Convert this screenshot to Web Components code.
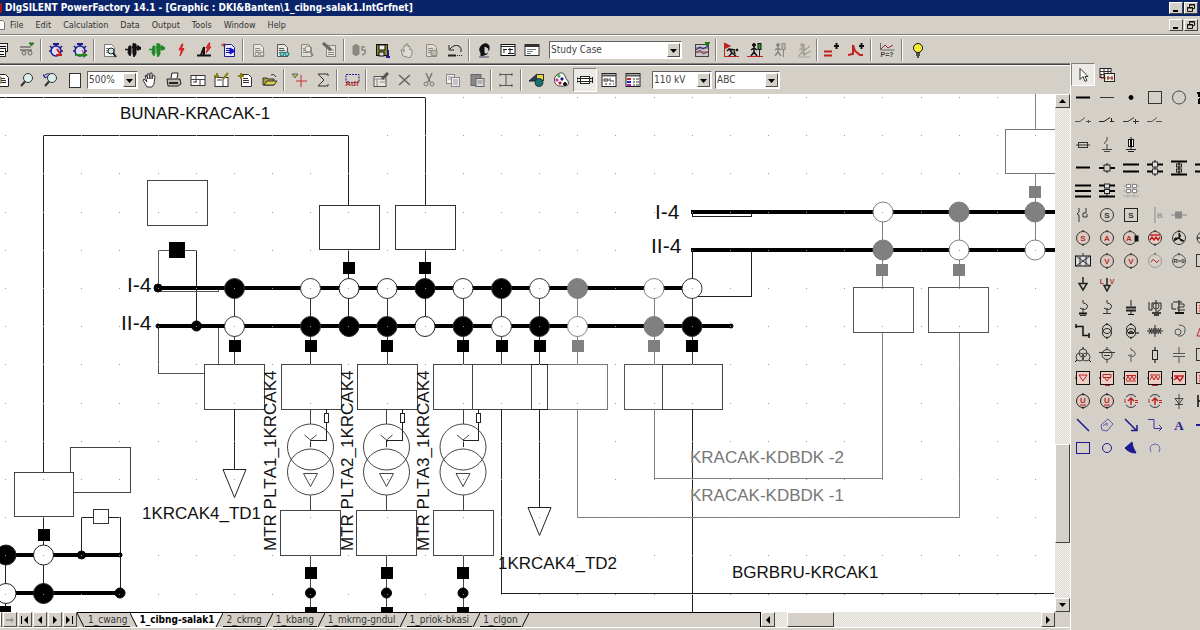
<!DOCTYPE html>
<html lang="en">
<head>
<meta charset="utf-8">
<title>DIgSILENT PowerFactory 14.1</title>
<style>
  html, body { margin: 0; height: 100%; overflow: hidden; }
  body { background: #d4d0c8; font-family: "DejaVu Sans Condensed", "DejaVu Sans", sans-serif; font-size: 9px; color: #222; }
</style>
</head>
<body>
<pf-app></pf-app>
<script>
/* ---------- icon library: 16 x 16 drawings ---------- */
const P = (d, stroke = '#000', fill = 'none', w = 1) =>
  `<path d="${d}" stroke="${stroke}" fill="${fill}" stroke-width="${w}"/>`;
const C = (x, y, r, stroke = '#222', fill = 'none', w = 1) =>
  `<circle cx="${x}" cy="${y}" r="${r}" stroke="${stroke}" fill="${fill}" stroke-width="${w}"/>`;
const R = (x, y, w, h, stroke = '#222', fill = 'none', sw = 1) =>
  `<rect x="${x}" y="${y}" width="${w}" height="${h}" stroke="${stroke}" fill="${fill}" stroke-width="${sw}"/>`;
const T = (t, x, y, c = '#b03030', s = 8) =>
  `<text x="${x}" y="${y}" fill="${c}" font-size="${s}" font-weight="bold" text-anchor="middle" font-family="Liberation Sans, sans-serif">${t}</text>`;
const G = '#8a8880', RED = '#c02020', BLUE = '#1c1c90';
const page = (c, f = '#fff') => P('M3.5 2.5h7l3 3v9h-10z', c, f) + P('M5 6.500h5M5 8.500h6M5 10.500h6', c);
const glass = c => C(9, 6, 4.5, c, '#d8f0ec') + P('M6 9.500L2 14', c, 'none', 2);
const clock = P('M5 2h6M8 2v2', BLUE, 'none', 2) + C(8, 9, 5, BLUE, '#dcdcf4', 1.5) + P('M2 4l2 2M14 4l-2 2M1 9h2M13 9h2', BLUE, 'none', 1.5);
const man = c => C(7, 3, 1.5, c, c) + P('M7 5v5l-3 4M7 10l3 4M4 8l3-2 3 2', c, 'none', 1.5);
const box = R(1.5, 1.5, 13, 13, '#111', '#ecd0c8') + P('M0 8h2', '#000');
const bars = c => P('M0 7.500h4M7 5.500h9M8.500 1v9M13 7h3', c, 'none', 1.5) + P('M4 4h2v7l-1 3-2-3zM8 2h3v10l-2 3-1-3zM12 4h2v4h-2z', c, c);

const ICONS = {
  pages: R(3.5, 1.500, 9, 8, '#222', '#eee') + R(1.5, 6.500, 9, 8, '#222', '#fff') + P('M3 9.500h6M3 12.500h6M5 4.500h6'),
  specs: P('M1 5h11M1 8h12', G, 'none', 2) + C(5, 11, 2, '#666') + C(11, 11, 2, '#666') + P('M10 1h5l-2.500 3z', '#287828', '#287828'),
  clockl: clock + P('M9 7l4 6M8 13h6', RED, 'none', 2),
  clockg: clock + P('M3 13h12M11 11l3 2-3 2', '#208820', 'none', 2) + P('M10 8l2 4', RED),
  docfind: page('#777', '#fff') + C(10, 9, 3, '#222', '#cde8e4') + P('M12 11l3 4', '#222', 'none', 2),
  barsk: bars('#111'), barsg: bars('#208828'),
  bolt: P('M9 2L6 8h2.500L7 14l4-7.500H8.500L10 2z', '#d02020', '#e03030'),
  boltk: P('M0 13.500h14M4 13l3-8v9', '#111', 'none', 2) + P('M12 1L9 6h2l-2 5 5-6h-2l1-4z', '#d02020', '#e03030'),
  docarrow: page(BLUE, '#e8e8ff') + P('M0 3h5M3 1v4', '#902020', '#902020') + P('M9 6l5 3-5 3z', '#1010d0', '#1010d0'),
  docspec: page(G, '#e8e6e0') + C(7, 12, 2, G) + C(12, 12, 2, G),
  docspec2: page('#555', '#e8e8e4') + C(8, 12, 2, '#087878', '#8cc') + C(13, 12, 2, '#087878', '#8cc'),
  docfindg: page(G, '#e0ddd6') + C(10, 7, 3, G, '#e8e6e0') + P('M12 9l3 5', G, 'none', 2),
  docpen: R(4.5, 3.500, 9, 11, G, '#e4e2dc') + P('M6 8h6M6 10.500h6M6 12.500h6', G) + P('M1 1l8 7', '#666', 'none', 3),
  db: P('M2 4q3-3 6 0v8q-3 3-6 0z', G, G) + P('M11 5h3M11 4v4h3q1 4-3 5', G, 'none', 1.5),
  save: R(1.500, 2.500, 11, 11, '#111', '#8c8c20') + R(4, 3, 6, 5, '#111', '#eee') + R(4, 10, 5, 4, '#111', '#ddd') + P('M13 8v7M11 15h4', BLUE, 'none', 2),
  hand: P('M4 14L2 8l1-1 2 3V4l1-1 1 1V2l2 0v3l1-1 1 1v3l1-1 1 1v4l-2 4z', G, '#dedbd4'),
  docdb: page(G, '#dedbd4') + P('M8 9q4-2 6 0v4q-3 2-6 0z', G, '#bbb8b0'),
  undo: P('M3 7q4-5 9-3 3 2 2 6M2 3v5h5', '#222') + P('M1 13.500h8', '#222', 'none', 2) + P('M10 13.500h1M12 13.500h1M14 13.500h1', '#222'),
  head: P('M5 14v-3q-3-4 1-8 5-3 7 1v4l-2 1v3z', '#111', '#111') + P('M9 5l3 2-1 4H9z', '#ccc', '#ddd') + P('M3 15h10', '#446'),
  win: R(1, 2.500, 14, 11, '#111', '#fff') + P('M1 4.500h14M4 7v4M3 7.500h4M8 7.500h5M8 11.500h6M10 6v6', '#222'),
  winlines: R(1, 2.500, 14, 11, '#333', '#fff') + P('M1 4h14', '#333', 'none', 2) + P('M3 7.500h9M3 9.500h6M3 11.500h4', '#777'),
  graph: R(1.500, 2.500, 13, 12, '#444', '#c8c8c8') + P('M1 6h13M1 10h13', '#555') + P('M2 11l4-3 3 4 5-2', '#a03040') + P('M2 8l4-3 3 2 5-3', BLUE) + P('M11 0h5l-3 4z', '#187818', '#187818'),
  runflag: P('M1.500 1v14', RED) + P('M2 2l4 2-4 2z', RED, RED, 2) + P('M1 14.500h15', RED) + C(14, 8, 1, '#111', '#111') + P('M12 8l-6-1-2 2M7 8l2 3-3 3M9 11l4 3M11 9l1 3', '#111', 'none', 1.5),
  walk: man('#111') + P('M0 14.500h16', RED) + R(11, 1.500, 3, 6, '#111', '#30a030') + P('M12.500 8v7', '#222'),
  walkg: man(G) + R(11, 1.500, 3, 6, G, '#bbb') + P('M12.500 8v7', G),
  walkg2: man('#aaa79f') + P('M9 2v11M10 8l5-4M10 12l6-3', G) + P('M3 15h12', '#aaa79f'),
  eqplus: P('M0 9.500h8M0 13.500h8', RED, 'none', 2) + P('M12.500 1v6M10 4h5', '#111', 'none', 2),
  peakplus: P('M0 13l5-1V3l2 6 5 4h3', RED, 'none', 2) + P('M13.500 1v6M11 4h5', '#111', 'none', 2),
  curve: P('M1.500 1v7h14', '#666') + P('M2 7l4-4 3 3 5-3', '#902040') + T('P=?', 8, 15, '#444', 7),
  bulb: C(8, 6, 4.500, '#111', '#f4f030') + P('M6 11h4M6 13h4M7 15h2', '#222', 'none', 1.5),

  gopage: page('#222') + P('M0 5h6v6H0z', '#666', '#e8e030'),
  zoom: glass('#333'), zoomback: glass('#333') + P('M1 5q1-4 6-3M0 2l2 4 3-2', BLUE),
  sheet: R(2.500, 1.500, 11, 14, '#333', '#fff'),
  handk: P('M5 15L1 8l1-1 3 3-2-6 1-1 2 4-1-5 2 0 1 5V1l2 0v6l1-4 2 1-1 8-2 3z', '#333', '#fff'),
  print: P('M5 6l1-5h6l-1 5', '#222', '#fff') + P('M1 7h13l1 5-3 2H2z', '#222', '#bdb9ae') + P('M3 11h9', '#222', 'none', 2),
  panel: R(1, 3.500, 14, 10, '#333', '#fff') + P('M1 7.500h14M6 4v6M10 7v6M3 10h4', '#444'),
  panelstar: R(1, 5.500, 13, 9, '#333', '#fff') + P('M3 8h5M9 7v7', '#444') + P('M0 4h5M3 1v5M14 1l-5 6', '#8a8418', 'none', 2),
  newdoc: page('#333') + P('M0 4h6M3 1v6', '#8a8418', 'none', 2),
  folder: P('M1 13V6h4l1 1h6v6z', '#333', '#a8a030') + P('M2 13l3-4h10l-3 4z', '#333', '#d8d050') + P('M9 3q3-2 5 2', '#333'),
  redplus: P('M10 3v12M5 9h11', '#c83030') + P('M1 2h6l-3 4z', '#666', '#b8c030'),
  sigma: P('M13 4V2H3l6 6-6 6h10v-2', '#333', 'none', 1),
  adf: `<rect x="2" y="2.500" width="13" height="8" fill="none" stroke="${BLUE}" stroke-dasharray="2 1"/>` + T('Adf', 8, 14, '#b03030', 8),
  editform: R(1, 4.500, 12, 10, '#555', '#e8e6e0') + P('M1 7h12M4 7v7M7 10h5', '#888') + P('M15 1l-6 6', '#555', 'none', 3),
  x: P('M2 3l11 10M13 3L2 13', '#666', 'none', 1.5),
  cut: P('M5 1l4 9M11 1L7 10', '#777', 'none', 1.5) + C(5, 12, 2, '#777') + C(11, 12, 2, '#777'),
  copy: R(1.500, 2.500, 8, 9, '#888', '#eee') + R(6.500, 5.500, 8, 9, '#888', '#eee') + P('M8 8h5M8 10h5M8 12h5M3 5h4M3 7h3', '#999'),
  paste: R(2, 2.500, 10, 11, '#666', '#888') + R(7, 6.500, 8, 8, '#666', '#ddd') + P('M8.500 9h5M8.500 11h5', '#888'),
  ibeam: P('M2 2.500h12M2 13.500h12M2 1v3M14 1v3M2 12v3M14 12v3M8 3v10', '#555'),
  shapes: P('M0 9l8-7v7z', '#222', '#204070') + R(7.500, 2.500, 7, 6, '#333', '#e8d840') + C(10, 10.500, 4, '#183838', '#187070'),
  palette: P('M5 2q5-3 7 2 1 3 3 5 2 5-4 5-7 1-9-3-2-6 3-9z', '#444', '#fff') + C(6, 4, 1.200, '#40b040', '#40b040') + C(4, 8, 1.200, '#d030a0', '#d030a0') + C(7, 11, 1.200, RED, RED) + C(9, 7, 1.200, BLUE, BLUE) + C(12, 12, 1.500, '#111', '#111'),
  resist: R(3.500, 4.500, 9, 7, '#222', '#fff') + P('M0 6.500h16M0 9.500h16M0 5v6M15.500 5v6', '#222'),
  panelbits: R(1, 1.500, 14, 13, '#222', '#fff') + P('M1 3.500h14', '#555', 'none', 2) + P('M3 7h4v2H3zM9 6v3h4M4 12h2M8 12h2M12 12h1', '#333'),
  panelcol: R(1, 1.500, 14, 13, '#222', '#fff') + P('M1 3.500h14', '#555', 'none', 2) + P('M2 7h4', '#d02020', '#000', 2) + P('M2 10h4', '#2020d0', '#000', 2) + P('M2 13h4', '#c020a0', '#000', 2) + P('M8 7h2M11 7h3M8 10h2M11 10h3M8 13h2M11 13h3', '#333'),

  pointer: P('M5 1.500v11l3-3 2 5 2-1-2-4h3z', '#333', '#fff'),
  tablelay: R(1, 1.500, 11, 9, '#222', '#fff') + P('M1 4.500h11M1 7.500h11M5 2v8M9 2v8', '#333') + R(5.500, 6.500, 10, 8, '#222', '#eed') + P('M2 7v4h5M8 11h6M9 9v4M13 9v4', '#802020'),
  hbar: P('M1 7.500h14', '#000', 'none', 2), hline: P('M1 7.500h14', '#333'),
  dot: C(8, 7.500, 2, '#000', '#000'), sq: R(1.500, 1.500, 13, 12, '#333'), circ: C(8, 7.500, 6.500, '#444'),
  clipa: P('M2 3h10M4 3v4M4 9h10M4 9v5', '#000', 'none', 2),
  sw1: P('M0 8.500h5l5-4M11 8.500h5M13.500 7v3', '#555'), sw2: P('M0 8.500h5l6-4M12.500 5v4M11 8.500h4', '#222'),
  sw3: P('M0 8.500h5l6-4M12.500 6v5M10 8.500h6', '#333'), sw4: P('M0 8.500h5l5-4M9 8.500h6', '#555'),
  fuse: R(3.500, 5.500, 9, 5, '#333') + P('M1 8h14', '#333'),
  gnd: P('M8 0v3l-3 4M8 7v5M3 12.500h10M5 14.500h6', '#444'),
  gndf: P('M8 0v3M8 10v3M3 12.500h10M5 14.500h6', '#222') + R(5.500, 2.500, 5, 7, '#111', '#fff') + P('M8 3v6', '#000', 'none', 2),
  busb: P('M0 8h5M11 8h5', '#000', 'none', 2) + R(5, 5, 6, 6, '#222', '#d4d0c8') + P('M8 3v2M8 11v2'),
  bus2: P('M0 4.500h16M0 11.500h16', '#000', 'none', 2),
  bus2b: P('M0 4.500h16M0 11.500h16', '#000', 'none', 2) + R(5.500, 2, 5, 5, '#333', '#ddd') + R(5.500, 9, 5, 5, '#333', '#ddd') + P('M8 0v2M8 7v2M8 14v2'),
  busi: P('M0 1.500h16M0 14.500h16', '#000', 'none', 2) + R(5.500, 4, 5, 3, '#222') + R(5.500, 9, 5, 3, '#222') + P('M8 2v12'),
  bus3: P('M0 2.500h16M0 8h16M0 13.500h16', '#000', 'none', 2),
  bus3b: P('M0 2.500h16M0 8h16M0 13.500h16', '#000', 'none', 2) + R(5.500, 1, 5, 4, '#222', '#ddd') + R(5.500, 6.500, 5, 4, '#222', '#ddd') + P('M8 11v3'),
  busg: P('M0 3h16M0 8h16M0 13h16M5 0v15M11 0v15', '#aaa') + R(3.500, 1.500, 4, 3, '#888', '#fff') + R(9.500, 1.500, 4, 3, '#888', '#fff') + R(3.500, 6.500, 4, 3, '#888', '#fff') + R(9.500, 6.500, 4, 3, '#888', '#fff'),
  zig: P('M4 1v4l-2 2 2 1v7M11 1v5M11 6h-3v4h4V7', '#333'),
  circS: C(8, 8, 6.500, '#333') + T('S', 8, 11, '#333', 8), boxS: R(1.500, 1.500, 13, 13, '#222') + T('S', 8, 11, '#333', 8),
  Bl: P('M8 0v16', '#888') + T('B', 13, 11, '#999', 8),
  gsq: R(4.500, 5, 6, 6, '#888', '#888') + P('M0 8h16', '#888'),
  cS: P('M8 0v2M8 14v2') + C(8, 8, 6.500, '#333', '#dccac2') + T('S', 8, 11), cA: P('M8 0v2M8 14v2') + C(8, 8, 6.500, '#333', '#dccac2') + T('A', 8, 11),
  cAb: P('M7 0v2') + C(7, 8, 6.500, '#333', '#dccac2') + T('A', 6, 11) + R(12, 6, 3, 5, '#111', '#111'),
  cW: P('M8 0v2M8 14v2') + C(8, 8, 6.500, '#333', '#ecd0c8') + P('M3 5h10M3 10l2-3 2 3 2-3 2 3 2-3', RED, 'none', 1.500),
  fan: C(8, 8, 6.500, '#333') + P('M8 8V3l1.500 3zM8 8l-5 3 1-3zM8 8l5 3h-3z', '#111', '#111') + P('M8 0v2'),
  half: C(8, 8, 6, '#333') + P('M2 8h12'),
  net: R(0.500, 3, 15, 10, '#111', '#ddd') + P('M1 3l14 10M1 13L15 3M5 3v10M11 3v10M8 0v3', '#333'),
  cV: P('M8 0v2M8 14v2') + C(8, 8, 6.500, '#333', '#dccac2') + T('V', 8, 11), cVc: P('M8 0v2M8 14v3') + C(8, 8, 6.500, '#333', '#dccac2') + T('V', 8, 11),
  sine: P('M8 0v2') + C(8, 8, 6.500, '#999') + P('M4 9q2-4 4-1t4-1', RED),
  rg: P('M8 0v2') + C(8, 8, 6.500, '#555') + T('R=0', 8, 10, '#333', 6),
  load: P('M8 0v6M4 6.500h8L8 13z', '#222', 'none', 1.5),
  loadlv: P('M8 1v7M5 8.500h6L8 14z', '#222', 'none', 1.5) + T('L', 3, 7, '#b03030', 7) + T('V', 13, 7, '#b03030', 7),
  coilg: P('M8 0v3q6 1 4 5-2 3-7 0M8 8v5M5 15.500h6', '#333') + P('M4 13.500h8', '#111', 'none', 2),
  coil: P('M8 0v3q6 1 4 5-2 3-7 0M8 8v6M4 13.500h8', '#333'),
  cap: P('M8 0v6M8 10v5', '#222') + P('M3 7.500h10M3 10.500h10', '#222', 'none', 2) + P('M5 14.500h6'),
  coilbox: P('M2 2v8h3V3h9v6l-4 3M9 0v12', '#222') + C(9, 6, 3, '#444') + P('M5 13h9M7 15h5', '#111', 'none', 1.5),
  coilbox2: P('M1 3v6h4M2 2h9M8 0v12', '#222') + P('M7 4h6v3H7v3h7', '#333') + P('M4 13h9', '#111', 'none', 2),
  redbox: R(1.500, 2.500, 12, 11, '#222', '#f0c8c0') + P('M4 6l3-1M4 8l4 2-4 1', RED),
  stepz: P('M1 1v4M1 3.500h7v9h6M14 10v5', '#111', 'none', 1.500),
  trafo: C(8, 6, 4.5) + C(8, 10, 4.5) + P('M8 0v2M8 14v2'), trafo3: C(8, 6, 4.5) + C(8, 10, 4.5) + P('M8 0v2M8 14v2M13 10h3M5 10l3-2 3 2z'),
  seriesx: P('M0 8h16M2 5l3 6M5 5l-3 6M11 5l3 6M14 5l-3 6M8 2v12M6 6h4v4H6z', '#222'),
  spiral: P('M8 2q7 0 6 6-1 6-7 5', '#555') + C(7, 9, 3, '#555'), redtri: P('M2 13l3-8 3 8zM5 2l8 12', RED),
  trafo3w: C(8, 6, 4, '#444') + C(5, 10, 4, '#444') + C(11, 10, 4, '#444') + P('M8 0v2M2 13l-2 2M14 13l2 2'),
  booster: P('M0 5.500h16M5 8.500h6M8 0v2M8 13v3', '#333') + C(8, 7.500, 5, '#333'),
  react: P('M8 1v2q5 1 4 5-2 3-7 0M8 7v8', '#555'), res: R(5.500, 3.500, 5, 9, '#222') + P('M8 0v3M8 13v3'),
  capv: P('M8 0v6M8 10v6M2 6.500h12M2 9.500h12', '#555'),
  vsc: box + P('M4 5h8l-4 6z', RED), vsc2: box + P('M4 4.500h8v3H4zM5 7l3 4 3-4M6 15.500h5', RED),
  inv: box + P('M3 10l2-4 2 4 2-4 2 4 2-4M3 5.500h10M3 11h10', RED), inv2: box + P('M3 10l2-4 2 4 2-4 2 4 2-4M3 5h10M5 15.500h6', RED),
  inv3: box + P('M3 6h10M3 10l3-3 3 4 3-4', RED, 'none', 1.500),
  cU: C(8, 8, 6.500, '#222', '#dccac2') + T('U', 8, 10, '#b03030', 8) + P('M5 12h6', RED) + P('M8 0v2M8 14v2'),
  up: P('M3 4q5-5 10 0M3 12q5 5 10 0', '#333') + P('M8 12V5M5 8l3-3 3 3', RED, 'none', 1.500) + P('M12 7.500h3M12 9.500h3M2 6v4', RED),
  diode: P('M8 1v15M4 5.500h8L8 11zM4 11.500h8', '#444'), thy: P('M3 2v12M3 8h5M8 2v12l4-6zM12 4l4-3', '#111', 'none', 1.500),
  bline: P('M2 2l12 12', BLUE, 'none', 1.500), poly: P('M2 8l7-6 5 5-6 7-5-1zM4 9l4-3v3', '#5858a8'),
  barrow: P('M2 2l11 11M8 13.500h6V8', BLUE, 'none', 1.500), bstep: P('M1 2.500h6v9h8M12 8l3 3-3 3', '#3838a0'),
  A: `<text x="8" y="13" fill="${BLUE}" font-size="13" font-weight="bold" text-anchor="middle" font-family="Liberation Serif, serif">A</text>`, tri: P('M1 8h6', BLUE, BLUE, 2),
  bsq: R(1.500, 2.500, 13, 11, BLUE), bcirc: C(8, 8, 4.500, BLUE), pie: P('M2 8l7-6 1 5 3 6q-7 0-11-5z', BLUE, BLUE), arc: P('M4 12q-3-7 4-8 7 1 4 8', '#6868a8')
};
const icon = n => `<svg width="16" height="16" viewBox="0 0 16 16" aria-hidden="true">${ICONS[n]}</svg>`;

const define = (name, html) => customElements.define(name, class extends HTMLElement {
  connectedCallback() {
    if (this.shadowRoot) return;
    this.attachShadow({ mode: 'open' }).innerHTML = typeof html === 'function' ? html(this) : html;
  }
});

/* ---------- window frame ---------- */
define('pf-window-buttons', `
<style>
  :host { display: flex; gap: 1px; }
  button { width: 14px; height: 12px; padding: 0; border: 1px solid; border-color: #fff #404040 #404040 #fff; background: #d4d0c8; display: grid; place-items: center; }
</style>
<button aria-label="Minimize"><svg width="10" height="8"><path d="M2 6h5v2H2z"/></svg></button>
<button aria-label="Restore"><svg width="10" height="8"><path d="M3.500 3V.5h5v4H7M1.500 3.500h5v4h-5zM3 1h6M1 4h6" fill="none" stroke="#111"/></svg></button>`);

define('pf-title-bar', `
<style>
  :host { display: flex; align-items: center; height: 16px; background: #0a246a; color: #fff; padding-right: 2px; flex: none; }
  i { width: 2px; height: 10px; background: #a01818; margin-right: 3px; }
  h1 { margin: 0; flex: 1; font-size: 10px; line-height: 16px; font-weight: bold; white-space: nowrap; }
</style>
<i></i><h1><slot></slot></h1><pf-window-buttons></pf-window-buttons>`);

define('pf-menu-bar', `
<style>
  :host { display: flex; align-items: center; height: 18px; padding-right: 2px; border-bottom: 1px solid #808080; flex: none; }
  svg { flex: none; margin-right: 5px; }
  nav { flex: 1; display: flex; gap: 12px; }
  a { color: #333; text-decoration: none; line-height: 18px; }
</style>
<svg width="5" height="12"><path d="M0 1.500h2.500l2 2v7H0" fill="#fff" stroke="#777"/></svg>
<nav>${['File', 'Edit', 'Calculation', 'Data', 'Output', 'Tools', 'Window', 'Help'].map(t => `<a href="#${t}">${t}</a>`).join('')}</nav>
<pf-window-buttons></pf-window-buttons>`);

/* ---------- toolbars ---------- */
define('pf-tool', el => `
<style>
  :host { display: block; width: 24px; height: 24px; flex: none; }
  button { width: 100%; height: 100%; padding: 0; border: 0; background: none; display: grid; place-items: center; }
  :host([pressed]) button { background: #eceae6; border: 1px solid; border-color: #808080 #fff #fff #808080; }
</style>
<button aria-label="${el.getAttribute('icon')}">${icon(el.getAttribute('icon'))}</button>`);

define('pf-combo', el => `
<style>
  :host { display: flex; height: 18px; box-sizing: border-box; background: #fff; border: 1px solid; border-color: #606060 #fff #fff #606060; flex: none; position: relative; }
  select { appearance: none; border: 0; background: none; padding: 0 16px 0 1px; width: 100%; font: 10px "DejaVu Sans Condensed", sans-serif; color: #444; }
  svg { position: absolute; right: 1px; top: 1px; background: #d4d0c8; border: 1px solid; border-color: #fff #505050 #505050 #fff; pointer-events: none; }
</style>
<select aria-label="${el.getAttribute('label')}"><option>${el.getAttribute('value')}</option></select>
<svg width="11" height="12"><path d="M2 5h7L5.500 9z"/></svg>`);

define('pf-toolbar', el => `
<style>
  :host { display: flex; align-items: center; overflow: hidden; flex: none; border-top: 1px solid #fff; }
  .row { display: flex; align-items: center; margin-left: -9px; }
  hr { width: 1px; height: 22px; margin: 0 2px 0 1px; border: 0; border-left: 1px solid #808080; background: #fff; }
  hr.wide { margin: 0 3px 0 2px; }
  .case { width: 133px; margin: 0 8px 0 5px; }
  .zoom { width: 51px; }
  .volt { width: 60px; margin: 0 3px 0 7px; }
  .phase { width: 65px; }
</style>
<div class="row" role="toolbar">${el.getAttribute('items').trim().split(/\s+/).map(n =>
  n === '|' ? '<hr>' : n === '||' ? '<hr class="wide">' :
  n === 'CASE' ? '<pf-combo class="case" label="Study case" value="Study Case"></pf-combo>' :
  n === 'ZOOM' ? '<pf-combo class="zoom" label="Zoom" value="500%"></pf-combo>' :
  n === 'VOLT' ? '<pf-combo class="volt" label="Voltage" value="110 kV"></pf-combo>' :
  n === 'PHASE' ? '<pf-combo class="phase" label="Phases" value="ABC"></pf-combo>' :
  `<pf-tool icon="${n.replace('*', '')}"${n.endsWith('*') ? ' pressed' : ''}></pf-tool>`).join('')}</div>`);

/* ---------- element palette ---------- */
const ROWS = [
  'hbar hline dot sq circ clipa', 'sw1 sw2 sw3 sw4 - -', 'fuse gnd gndf - - -', 'hbar busb bus2 bus2b busi bus2',
  'bus3 bus3b busg - - -', 'zig circS boxS Bl gsq -', 'cS cA cAb cW fan half', 'net cV cVc sine rg sq',
  'load loadlv - - - -', 'coilg coil cap coilbox coilbox2 redbox', 'stepz trafo trafo3 seriesx spiral redtri',
  'trafo3w booster react res capv sq', 'vsc vsc2 inv inv2 inv3 redbox', 'cU cU up up diode thy',
  'bline poly barrow bstep A tri', 'bsq bcirc pie arc - -'];
define('pf-palette', `
<style>
  :host { display: block; width: 130px; box-sizing: border-box; overflow: hidden; border-left: 1px solid #fff; flex: none; }
  .modes { display: flex; height: 23px; }
  .grid { display: grid; grid-template-columns: repeat(6, 24px); grid-auto-rows: 23px 24px 23px; }
  .modes > *, .grid > * { height: 100%; }
</style>
<div class="modes"><pf-tool icon="pointer" pressed></pf-tool><pf-tool icon="tablelay"></pf-tool></div>
<div class="grid">${ROWS.join(' ').split(' ').map(n => n === '-' ? '<span></span>' : `<pf-tool icon="${n}"></pf-tool>`).join('')}</div>`);

/* ---------- scroll bars ---------- */
define('pf-scrollbar', el => {
  const v = el.hasAttribute('vertical');
  return `
<style>
  :host { display: flex; flex-direction: ${v ? 'column' : 'row'}; background: repeating-conic-gradient(#f4f2ee 0 25%, #dcd9d2 0 50%) 0 0 / 2px 2px; }
  button { flex: none; ${v ? 'width: 100%; height: 14px' : 'height: 100%; width: 14px'}; padding: 0; background: #d4d0c8; border: 1px solid; border-color: #fff #404040 #404040 #fff; display: grid; place-items: center; box-sizing: border-box; }
  .before { flex: ${v ? '338 1 0' : '12 1 0'}; } .thumb { flex: ${v ? '98 1 0' : '45 1 0'}; background: #d4d0c8; border: 1px solid; border-color: #fff #404040 #404040 #fff; box-sizing: border-box; } .after { flex: ${v ? '55 1 0' : '207 1 0'}; }
</style>
<button aria-label="Back"><svg width="8" height="8"><path d="${v ? 'M0 6h7L3.500 2z' : 'M6 0v8L2 4z'}"/></svg></button>
<div class="before"></div><div class="thumb"></div><div class="after"></div>
<button aria-label="Forward"><svg width="8" height="8"><path d="${v ? 'M0 2h7L3.500 6z' : 'M2 0v8l4-4z'}"/></svg></button>`;
});

/* ---------- single line diagram ---------- */
const L = (d, c = '#222') => `<path d="${d}" stroke="${c}"/>`;
const B = (x, y, c = '#444', w = 60, h = 45) => `<rect x="${x}" y="${y}" width="${w}" height="${h}" fill="#fff" stroke="${c}"/>`;
const S = (x, y, c = '#000') => `<rect x="${x - 6}" y="${y}" width="12" height="12" fill="${c}"/>`;
const N = (x, y, f = '#000', c = '#222', r = 10) => `<circle cx="${x}" cy="${y}" r="${r}" fill="${f}" stroke="${c}"/>`;
const K = '#000', W = '#fff', GY = '#808080';
const dots = () => { let s = ''; for (let i = 0; i < 28; i++) for (let j = 0; j < 14; j++) s += `M${Math.round(5 + 38.15 * i)} ${Math.round(97 + 38.2 * j)}h1v1h-1z`; return `<path class="dots" d="${s}"/>`; };
const bay = (x, top, bottom, col = K) => {
  const line = col === GY ? GY : '#333';
  return L(`M${x} 288V364`, line) + N(x, 288.500, top, line) + N(x, 326.500, bottom, line);
};
const trafo = x => L(`M${x} 409v15M${x} 495v16M${x} 555v60`, '#444') +
  `<g class="n">${L(`M${x + 23} 447a23 23 0 1 1-46 0a23 23 0 1 1 46 0M${x + 23} 472a23 23 0 1 1-46 0a23 23 0 1 1 46 0`, '#444')}
  ${L(`M${x - 6} 435l6 5 6-5M${x - 7} 473.500h14l-7 13z`, '#444')}</g>` +
  L(`M${x} 447v-6.500h15.500V422M${x + 15.500} 413v-4M${x + 13.500} 413.500h4v9h-4z`) +
  B(x - 30, 510.500) + S(x, 567) + N(x, 593, K, K, 5) + S(x, 607);
const mtr = (x, n) => `<text transform="translate(${x} 551) rotate(-90)">MTR PLTA${n}_1KRCAK4</text>`;

define('pf-diagram', `
<style>
  :host { display: block; background: #fff; overflow: hidden; min-width: 0; }
  svg { display: block; width: 100%; height: 100%; }
  path, rect { shape-rendering: crispEdges; } .n path { shape-rendering: auto; }
  path { fill: none; } .bus { stroke: #000; stroke-width: 4; } .dots { fill: #999; }
  text { font: 17px "Liberation Sans", sans-serif; fill: #111; font-kerning: none; } .big { font-size: 21px; } .gray { fill: #777; }
</style>
<svg role="img" aria-label="Single line diagram"><g transform="translate(0 -94)">
${L('M0 97.500H425.500V206M43.500 472V135.500H348.500V206')}
${B(147.500, 180.500)}${B(319.500, 205.500, '#333', 60, 44)}${B(395.500, 205.500, '#333', 60, 44)}
${L('M196.500 250V326M348.500 249v40M425.500 249v40')}
${L('M158.500 288V250.500H196.500M158.500 291.500H218.500V288M158.500 326V373.500H204M218.500 326V364', '#555')}
${L('M692.500 288V250M692 296.500H751.500V250M692.500 212V216.500H751.500V212')}
<path class="bus" d="M157 288H692M157 326H732M691 212H1056M691 250H1056M0 555H122M0 593H120"/>
<rect x="169" y="242" width="16" height="16"/>${S(349, 262)}${S(425, 262)}
${bay(234.500, K, W)}${bay(310.500, W, K)}${bay(387, W, K)}${bay(463, W, K)}${bay(501.500, K, W)}${bay(539.500, W, K)}
${bay(577.500, GY, W, GY)}${bay(654, W, GY, GY)}${bay(692, W, K)}
${L('M348.500 288V326M425.500 288V326')}${N(349, 288.500, W)}${N(349, 326.500)}${N(425, 288.500)}${N(425, 326.500, W)}
${N(158, 288, K, K, 4)}${N(196.500, 326, K, K, 5)}
${[234.500, 311, 387, 463, 501.500, 540, 692].map(x => S(Math.round(x), 340)).join('')}${S(578, 340, GY)}${S(654, 340, GY)}
${B(204.500, 364.500)}${B(281.500, 364.500)}${B(357.500, 364.500)}${B(433.500, 364.500)}${B(547.500, 364.500, '#777')}${B(487.500, 364.500)}${B(472.500, 364.500, '#444', 59)}
${L('M531 364.500H548M531 409.500H548')}${B(624.500, 364.500, '#555')}${B(662.500, 364.500)}
${L('M234.500 409V469M539.500 409V507M501.500 409V593.500H1054M692.500 409V612')}
<g class="n">${L('M223 469.500h23l-11.500 28zM528 507.500h23l-11.500 28z')}</g>
${L('M577.500 409V517.500H959.500V332M654.500 409V478.500H882.500V332M1035.500 94v35M1035.500 173v76M882.500 212v76M959.500 212v76', GY)}
${N(883, 212, W, GY)}${N(959, 212, GY, GY)}${N(1035, 212, GY, GY)}${N(883, 250, GY, GY)}${N(959, 250, W, GY)}${N(1035, 250, W, GY)}
${S(882, 264, GY)}${S(959, 264, GY)}${S(1035, 186, GY)}
${B(853.500, 287.500, '#555')}${B(928.500, 287.500, '#555')}${B(1005.500, 129.500, '#777', 60, 44)}
${trafo(310.500)}${trafo(386.500)}${trafo(463)}
${B(70.500, 447.500)}${B(14.500, 472.500, '#444', 59, 44)}
${L('M43.500 517V593M5.500 555v57M81.500 555V517.500H120.500V593')}${S(44, 529)}${B(93.500, 509.500, '#333', 15, 14)}
${N(6, 555)}${N(43.500, 555, W)}${N(6, 593.500, W)}${N(43.500, 593.500)}${N(81.500, 555, K, K, 4)}${N(120, 593, K, K, 5)}${N(120, 555, K, K, 2)}${S(5, 606)}
${N(158, 326, K, K, 2)}${N(731, 326, K, K, 2)}
${dots()}
<text x="120" y="119">BUNAR-KRACAK-1</text>
<text class="big" x="127" y="292">I-4</text><text class="big" x="121" y="330">II-4</text>
<text class="big" x="655" y="219">I-4</text><text class="big" x="651" y="253">II-4</text>
<text x="142" y="519">1KRCAK4_TD1</text><text x="498" y="569">1KRCAK4_TD2</text>
<text class="gray" x="690" y="463">KRACAK-KDBDK -2</text><text class="gray" x="690" y="501">KRACAK-KDBDK -1</text>
<text x="732" y="578">BGRBRU-KRCAK1</text>
${mtr(276, 1)}${mtr(353, 2)}${mtr(429, 3)}
</g></svg>`);

/* ---------- sheet tabs ---------- */
const edge = (dir, left, right) => `<svg class="edge" width="8" height="15"><path d="${dir === '\\' ? 'M0 0L8 15H0z' : 'M8 0L0 15V0z'}" fill="${left}"/><path d="${dir === '\\' ? 'M0 0L8 15V0z' : 'M8 0L0 15H8z'}" fill="${right}"/><path d="${dir === '\\' ? 'M0 0L7 14' : 'M8 0L1 14'}" stroke="#000" fill="none"/></svg>`;
const BG = '#d4d0c8';
define('pf-sheet-tabs', `
<style>
  :host { display: flex; height: 15px; min-width: 0; background: #d4d0c8; border-right: 1px solid #000; box-sizing: border-box; }
  .nav { display: flex; gap: 1px; }
  .nav button { width: 14px; height: 15px; padding: 0; background: #d4d0c8; border: 1px solid; border-color: #fff #505050 #505050 #fff; display: grid; place-items: center; }
  .nav button:first-child { width: 2px; overflow: hidden; }
  .tabs { display: flex; flex: 1; border-top: 1px solid #000; box-sizing: border-box; }
  .tabs button { border: 0; border-bottom: 1px solid #000; padding: 0 3px; background: #d4d0c8; font: 10px "DejaVu Sans Condensed", sans-serif; line-height: 12px; color: #333; white-space: nowrap; }
  .tabs button.on { background: #fff; border-color: #fff; font-weight: bold; color: #000; padding: 0 1px; }
  .edge { flex: none; }
</style>
<div class="nav"><button aria-label="Previous view"></button>
${[['Next view', 'M1 3h5V1l3 3-3 3V5H1z', '#999'], ['First', 'M1 0h1v8H1zM8 0v8L4 4z', K], ['Previous', 'M7 0v8L3 4z', K], ['Next', 'M3 0v8l4-4z', K], ['Last', 'M1 0v8l4-4zM7 0h1v8H7z', K]]
  .map(([n, d, c]) => `<button aria-label="${n}"><svg width="10" height="8"><path d="${d}" fill="${c}"/></svg></button>`).join('')}</div>
<div class="tabs">${edge('\\', BG, BG)}<button>1_cwang</button>${edge('\\', BG, W)}<button class="on">1_cibng-salak1</button>${edge('/', W, BG)}${
  ['2_ckrng', '1_kbang', '1_mkrng-gndul', '1_priok-bkasi', '1_clgon'].map(t => `<button>${t}</button>${edge('/', BG, BG)}`).join('')}</div>`);

/* ---------- application ---------- */
define('pf-app', `
<style>
  :host { display: flex; flex-direction: column; height: 100vh; background: #d4d0c8; overflow: hidden; }
  .standard { height: 27px; }
  .body { flex: 1; display: flex; min-height: 0; }
  main { flex: 1; display: flex; flex-direction: column; min-width: 0; border-top: 1px solid #808080; }
  .graphic { height: 29px; border-top: 1px solid #404040; box-shadow: inset 0 1px #fff; }
  .view { flex: 1; display: grid; grid-template: minmax(0, 1fr) 15px / minmax(0, 1fr) 15px; min-height: 0; }
  .bottom { display: grid; grid-template-columns: 761px minmax(0, 1fr); min-width: 0; }
  footer { height: 2px; border-top: 1px solid #fff; flex: none; }
</style>
<pf-title-bar>DIgSILENT PowerFactory 14.1 - [Graphic : DKI&amp;Banten\\1_cibng-salak1.IntGrfnet]</pf-title-bar>
<pf-menu-bar></pf-menu-bar>
<pf-toolbar class="standard" items="pages specs | clockl clockg | docfind barsk barsg bolt boltk docarrow | docspec docspec2 docfindg docpen | db save hand docdb undo | head win winlines CASE graph | runflag walk walkg walkg2 | eqplus peakplus || curve || bulb"></pf-toolbar>
<div class="body">
  <main>
    <pf-toolbar class="graphic" items="gopage zoom zoomback sheet ZOOM handk print panel panelstar newdoc folder | redplus sigma | adf | editform x cut copy paste | ibeam || shapes palette resist* panelbits panelcol VOLT PHASE"></pf-toolbar>
    <div class="view">
      <pf-diagram></pf-diagram><pf-scrollbar vertical></pf-scrollbar>
      <div class="bottom"><pf-sheet-tabs></pf-sheet-tabs><pf-scrollbar></pf-scrollbar></div><div></div>
    </div>
    <footer></footer>
  </main>
  <pf-palette></pf-palette>
</div>`);
</script>
</body>
</html>
